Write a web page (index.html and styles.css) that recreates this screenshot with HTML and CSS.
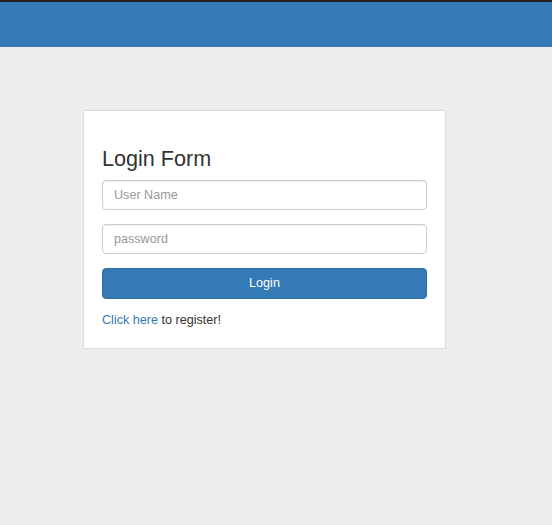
FILE: index.html
```html
<!DOCTYPE html>
<html>
<head>
<meta charset="utf-8">
<link rel="stylesheet" href="styles.css">
</head>
<body>
<header class="topbar"></header>
<main class="page">
  <section class="card">
    <h3 class="title">Login Form</h3>
    <form class="form">
      <input class="field" type="text" placeholder="User Name">
      <input class="field" type="password" placeholder="password">
      <button class="btn" type="button">Login</button>
    </form>
    <p class="note"><a class="link" href="#">Click here</a> to register!</p>
  </section>
</main>
</body>
</html>
```

FILE: styles.css
```css
* { box-sizing: border-box; }
html, body { margin: 0; padding: 0; }
body {
  background: #ededed;
  font-family: "Liberation Sans", Arial, sans-serif;
  font-size: 12.6px;
  color: #333;
  min-height: 525px;
}
.topbar {
  height: 47px;
  background: #337ab7;
  border-top: 2px solid #222;
}
.page {
  padding: 63px 0 0 83px;
}
.card {
  width: 363px;
  background: #fff;
  border: 1px solid #ddd;
  padding: 36px 18px 19px 18px;
}
.title {
  margin: 0 0 9px 0;
  font-size: 21.6px;
  font-weight: 400;
  line-height: 23.8px;
  color: #333;
}
.form {
  display: flex;
  flex-direction: column;
  gap: 14px;
}
.field {
  width: 325px;
  height: 30px;
  border: 1px solid #ccc;
  border-radius: 4px;
  padding: 0 11px;
  font-family: inherit;
  font-size: 12.6px;
  color: #555;
  box-shadow: inset 0 1px 1px rgba(0,0,0,.075);
  outline: none;
}
.field::placeholder { color: #999; }
.btn {
  width: 325px;
  height: 31px;
  background: #337ab7;
  border: 1px solid #2e6da4;
  border-radius: 4px;
  color: #fff;
  font-family: inherit;
  font-size: 12.6px;
  padding: 0 0 1px 0;
}
.note {
  margin: 12px 0 0 0;
  line-height: 18px;
}
.link {
  color: #337ab7;
  text-decoration: none;
}
```
